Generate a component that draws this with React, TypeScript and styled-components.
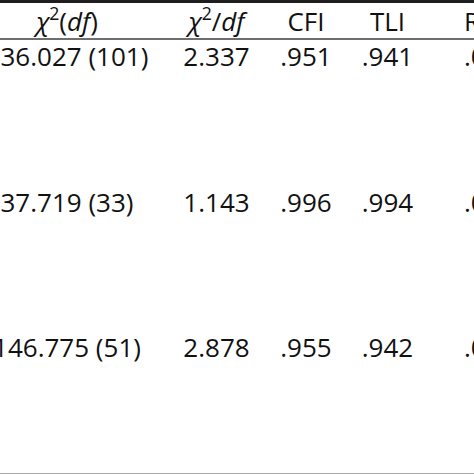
import styled, { createGlobalStyle } from "styled-components";

const Global = createGlobalStyle`
  html, body {
    margin: 0;
    padding: 0;
    background: #ffffff;
  }
  body {
    font-family: "Open Sans", "Lato", "Liberation Sans", sans-serif;
    color: #111111;
  }
`;

const Sheet = styled.div`
  width: 474px;
  height: 474px;
  overflow: hidden;
  background: #ffffff;
`;

const Table = styled.table`
  margin-left: -34px;
  width: 616px;
  table-layout: fixed;
  border-collapse: separate;
  border-spacing: 0;
  font-size: 26px;
  line-height: 32px;
`;

const Col = styled.col<{ $w: number }>`
  width: ${(p) => p.$w}px;
`;

const Head = styled.th<{ $left?: boolean }>`
  font-weight: normal;
  padding: 2px 0 1px;
  padding-left: ${(p) => (p.$left ? "36px" : "0")};
  text-align: ${(p) => (p.$left ? "left" : "center")};
  vertical-align: top;
  white-space: nowrap;
  border-top: 3px solid #1e1e1e;
  border-bottom: 2px solid #6e6e6e;
`;

const Row = styled.tr<{ $h: number }>`
  height: ${(p) => p.$h}px;
`;

const Cell = styled.td<{ $left?: boolean; $last?: boolean }>`
  padding: 0;
  padding-left: ${(p) => (p.$left ? "36px" : "0")};
  text-align: ${(p) => (p.$left ? "left" : "center")};
  vertical-align: top;
  white-space: nowrap;
  border-bottom: ${(p) => (p.$last ? "2px solid #a9a9a9" : "none")};
`;

const Sym = styled.i`
  font-style: italic;
`;

const Sup = styled.sup`
  font-size: 0.68em;
  line-height: 0;
  vertical-align: 0.62em;
`;

const widths = [202, 97, 82, 81, 154];

const rows = [
  ["236.027 (101)", "2.337", ".951", ".941", ".057 [.048, .066]"],
  ["37.719 (33)", "1.143", ".996", ".994", ".020 [.000, .047]"],
  ["146.775 (51)", "2.878", ".955", ".942", ".068 [.055, .081]"],
];

const heights = [146, 145, 144];

export default function App() {
  return (
    <Sheet>
      <Global />
      <Table>
        <colgroup>
          {widths.map((w, i) => (
            <Col key={i} $w={w} />
          ))}
        </colgroup>
        <thead>
          <tr>
            <Head>
              <Sym>χ</Sym>
              <Sup>2</Sup>(<Sym>df</Sym>)
            </Head>
            <Head>
              <Sym>χ</Sym>
              <Sup>2</Sup>/<Sym>df</Sym>
            </Head>
            <Head>CFI</Head>
            <Head>TLI</Head>
            <Head $left>RMSEA [90% CI]</Head>
          </tr>
        </thead>
        <tbody>
          {rows.map((r, i) => (
            <Row key={i} $h={heights[i]}>
              {r.map((v, j) => (
                <Cell key={j} $left={j === 4} $last={i === rows.length - 1}>
                  {v}
                </Cell>
              ))}
            </Row>
          ))}
        </tbody>
      </Table>
    </Sheet>
  );
}
